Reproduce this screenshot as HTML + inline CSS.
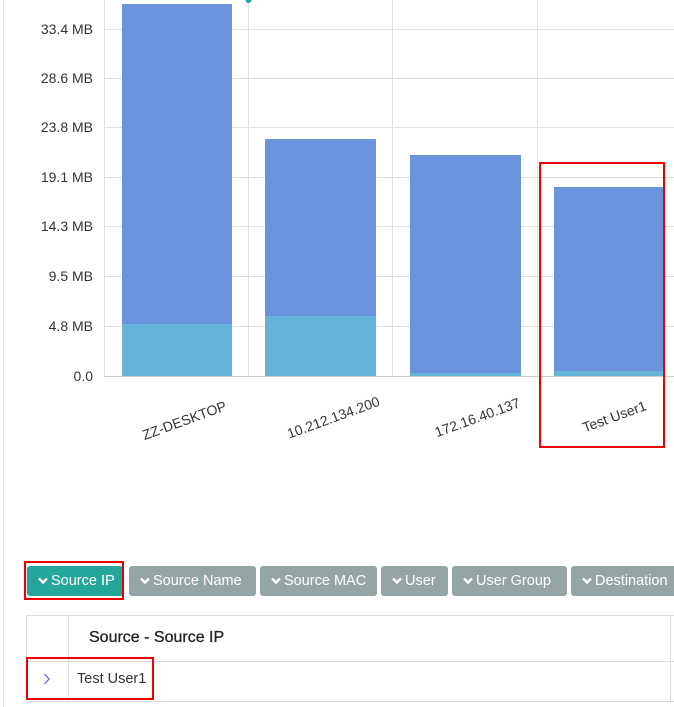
<!DOCTYPE html>
<html><head><meta charset="utf-8"><style>
body{margin:0;width:674px;height:707px;background:#fff;font-family:"Liberation Sans",sans-serif;overflow:hidden;position:relative}
.btn{position:absolute;top:566px;height:30px;background:#95a5a6;color:#fff;font-size:14.5px;line-height:30px;border-radius:3px;white-space:nowrap;padding-left:11px;box-sizing:border-box}
.btn svg{vertical-align:middle;margin-right:3px;position:relative;top:-1px}
.btn.a{background:#26a69a}
.red{position:absolute;border:2px solid #e00;box-sizing:border-box}
</style></head><body>
<div style="position:absolute;left:3px;top:0;width:1px;height:707px;background:#e6e6e6"></div>
<svg width="674" height="707" style="position:absolute;left:0;top:0">
<g stroke="#e0e0e0" stroke-width="1">
<line x1="104" x2="674" y1="29.5" y2="29.5"/><line x1="104" x2="674" y1="78.5" y2="78.5"/>
<line x1="104" x2="674" y1="127.5" y2="127.5"/><line x1="104" x2="674" y1="177.5" y2="177.5"/>
<line x1="104" x2="674" y1="226.5" y2="226.5"/><line x1="104" x2="674" y1="276.5" y2="276.5"/>
<line x1="104" x2="674" y1="326.5" y2="326.5"/>
<line x1="104.5" x2="104.5" y1="0" y2="376"/><line x1="248.5" x2="248.5" y1="0" y2="376"/>
<line x1="392.5" x2="392.5" y1="0" y2="376"/><line x1="537.5" x2="537.5" y1="0" y2="376"/>
</g>
<line x1="104" x2="674" y1="376.5" y2="376.5" stroke="#ccc"/>
<circle cx="248.5" cy="0" r="3" fill="#26a69a"/>
<g fill="#6994dd">
<rect x="122" y="4" width="110" height="320"/><rect x="265" y="139" width="111" height="178"/>
<rect x="410" y="155" width="111" height="219"/><rect x="554" y="187" width="110" height="185"/>
</g>
<g fill="#66b4da">
<rect x="122" y="324" width="110" height="52"/><rect x="265" y="316" width="111" height="60"/>
<rect x="410" y="373" width="111" height="3"/><rect x="554" y="371" width="110" height="5"/>
</g>
<g font-size="14" fill="#333" text-anchor="end">
<text x="93" y="34">33.4 MB</text><text x="93" y="83">28.6 MB</text><text x="93" y="132">23.8 MB</text>
<text x="93" y="182">19.1 MB</text><text x="93" y="231">14.3 MB</text><text x="93" y="281">9.5 MB</text>
<text x="93" y="331">4.8 MB</text><text x="93" y="381">0.0</text>
</g>
<g font-size="14" fill="#333" text-anchor="middle">
<text transform="translate(186,425) rotate(-20)">ZZ-DESKTOP</text>
<text transform="translate(335,422) rotate(-20)">10.212.134.200</text>
<text transform="translate(479,422) rotate(-20)">172.16.40.137</text>
<text transform="translate(616,421) rotate(-20)">Test User1</text>
</g>
</svg>
<div class="red" style="left:539px;top:162px;width:126px;height:286px"></div>

<div class="btn a" style="left:27px;width:96px"><svg width="10" height="7" viewBox="0 0 10 7"><path d="M1 1.5L5 5.5L9 1.5" stroke="#fff" stroke-width="2.4" fill="none"/></svg>Source IP</div>
<div class="btn" style="left:129px;width:127px"><svg width="10" height="7" viewBox="0 0 10 7"><path d="M1 1.5L5 5.5L9 1.5" stroke="#fff" stroke-width="2.4" fill="none"/></svg>Source Name</div>
<div class="btn" style="left:260px;width:117px"><svg width="10" height="7" viewBox="0 0 10 7"><path d="M1 1.5L5 5.5L9 1.5" stroke="#fff" stroke-width="2.4" fill="none"/></svg>Source MAC</div>
<div class="btn" style="left:381px;width:67px"><svg width="10" height="7" viewBox="0 0 10 7"><path d="M1 1.5L5 5.5L9 1.5" stroke="#fff" stroke-width="2.4" fill="none"/></svg>User</div>
<div class="btn" style="left:452px;width:115px"><svg width="10" height="7" viewBox="0 0 10 7"><path d="M1 1.5L5 5.5L9 1.5" stroke="#fff" stroke-width="2.4" fill="none"/></svg>User Group</div>
<div class="btn" style="left:571px;width:110px"><svg width="10" height="7" viewBox="0 0 10 7"><path d="M1 1.5L5 5.5L9 1.5" stroke="#fff" stroke-width="2.4" fill="none"/></svg>Destination</div>
<div class="red" style="left:24px;top:561px;width:100px;height:39px"></div>

<div style="position:absolute;left:26px;top:615px;width:660px;height:87px;border:1px solid #ddd;box-sizing:border-box"></div>
<div style="position:absolute;left:68px;top:615px;width:1px;height:87px;background:#ddd"></div>
<div style="position:absolute;left:670px;top:615px;width:1px;height:87px;background:#ddd"></div>
<div style="position:absolute;left:26px;top:661px;width:648px;height:1px;background:#ddd"></div>
<div style="position:absolute;left:89px;top:629px;font-size:16px;color:#222;-webkit-text-stroke:0.3px #222">Source - Source IP</div>
<svg width="8" height="12" viewBox="0 0 8 12" style="position:absolute;left:43px;top:673px"><path d="M1.5 1L6 6L1.5 11" stroke="#5b6fe0" stroke-width="1.3" fill="none"/></svg>
<div style="position:absolute;left:77px;top:671px;font-size:14.5px;color:#333">Test User1</div>
<div class="red" style="left:26px;top:657px;width:128px;height:43px"></div>
</body></html>
